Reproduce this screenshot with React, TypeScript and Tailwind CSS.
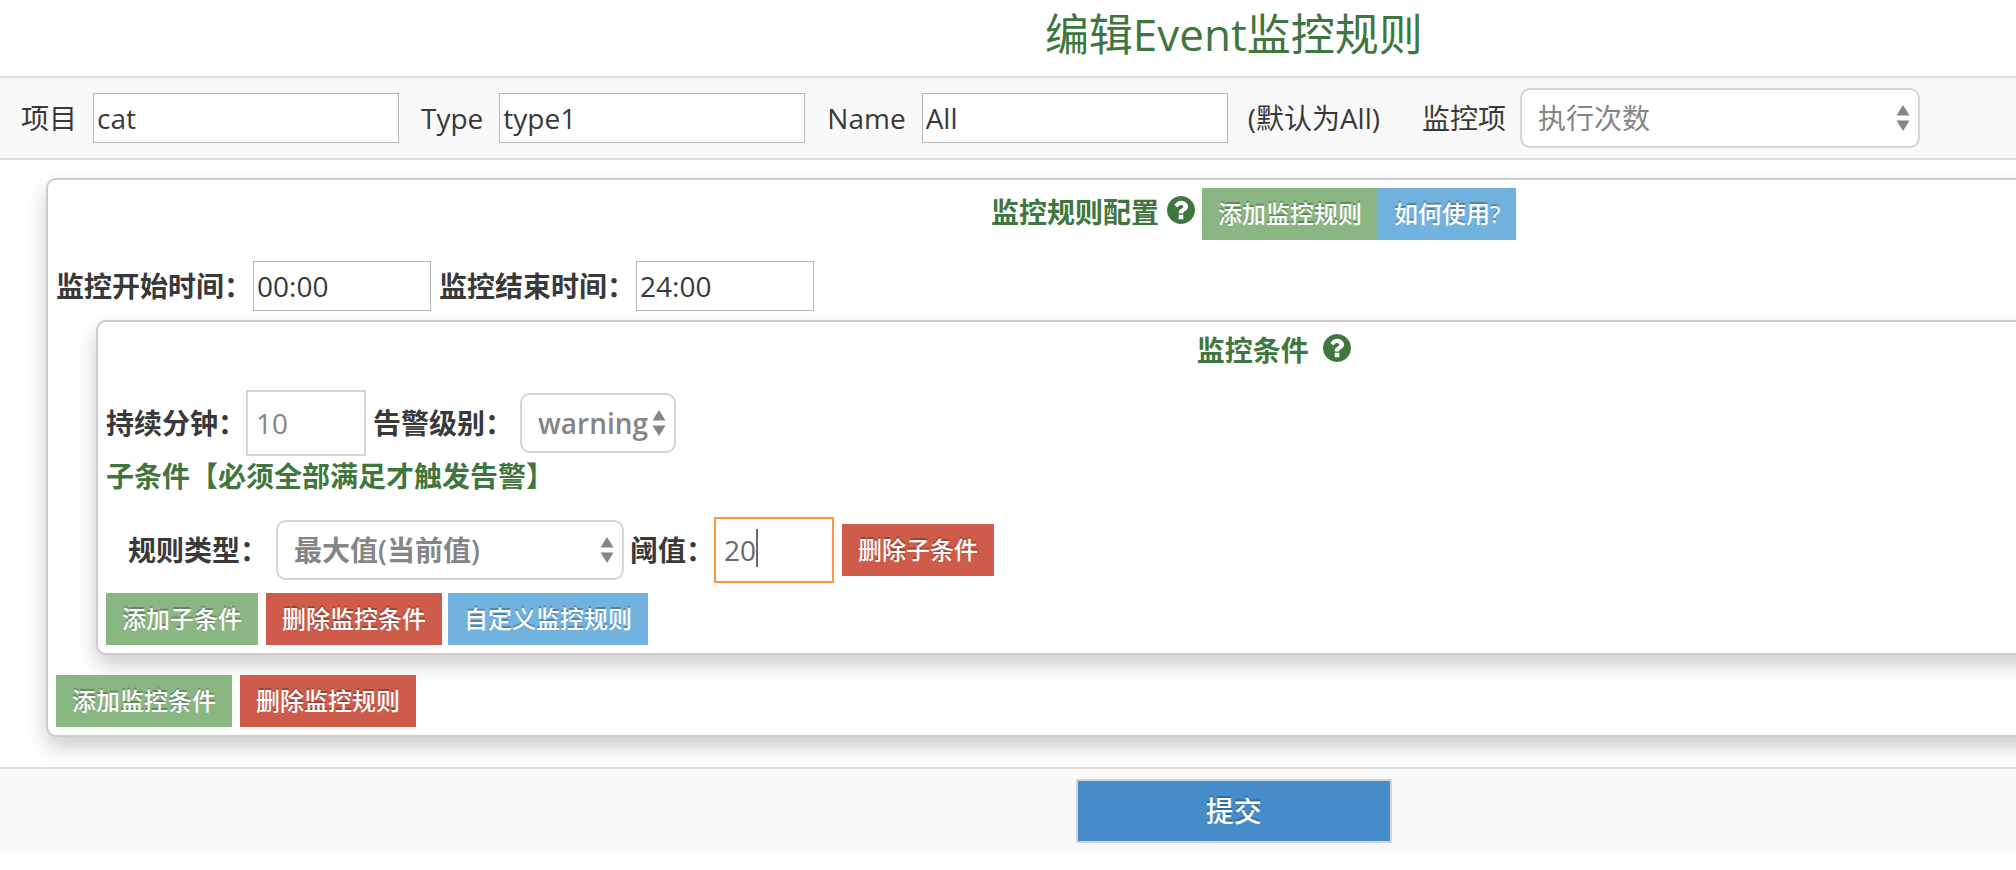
import type { ButtonHTMLAttributes, InputHTMLAttributes, ReactNode } from "react";

const tones = {
  success: "bg-[#89b682]",
  danger: "bg-[#cf5b4a]",
  info: "bg-[#72b2de]",
};

function ActionButton({ tone, ...rest }: { tone: keyof typeof tones } & ButtonHTMLAttributes<HTMLButtonElement>) {
  return (
    <button
      type="button"
      className={`${tones[tone]} h-[52px] px-4 text-2xl font-medium text-white whitespace-nowrap [text-shadow:0_-2px_0_rgba(0,0,0,0.25)]`}
      {...rest}
    />
  );
}

function HelpIcon() {
  return (
    <svg viewBox="0 0 1536 1536" className="size-7 shrink-0" fill="currentColor" role="img" aria-label="帮助">
      <path d="M896 1248v-192q0-14-9-23t-23-9H672q-14 0-23 9t-9 23v192q0 14 9 23t23 9h192q14 0 23-9t9-23zM1152 576q0-88-55.500-163T958 297t-170-41q-243 0-371 213-15 24 8 42l132 100q7 6 19 6 16 0 25-12 53-68 86-92 34-24 86-24 48 0 85.500 26t37.500 59q0 38-20 61t-68 45q-63 28-115.500 86.500T640 892v36q0 14 9 23t23 9h192q14 0 23-9t9-23q0-19 21.500-49.500T972 829q32-18 49-28.500t46-35 44.500-48 28-60.500 12.500-81zM1536 768q0 209-103 385.500T1153.500 1433 768 1536t-385.500-103T103 1153.500 0 768t103-385.500T382.500 103 768 0t385.500 103T1433 382.500 1536 768z" />
    </svg>
  );
}

function Select({ id, width, options }: { id: string; width: string; options: string[] }) {
  return (
    <span className={`relative inline-flex h-[60px] ${width}`}>
      <select
        id={id}
        className="h-full w-full appearance-none rounded-[10px] border-2 border-[#d5d5d5] bg-white pl-4 pr-6 text-[#858585] outline-none"
      >
        {options.map((option) => (
          <option key={option}>{option}</option>
        ))}
      </select>
      <svg viewBox="0 0 14 26" className="pointer-events-none absolute right-2.5 top-[17px] h-[26px] w-3.5" fill="#858585" aria-hidden="true">
        <path d="M7 0l6.500 10.500H.5zM7 26l6.500-10.500H.5z" />
      </svg>
    </span>
  );
}

function PlainInput(props: InputHTMLAttributes<HTMLInputElement>) {
  return <input type="text" {...props} className={`h-[50px] border border-[#b5b5b5] bg-white px-[3px] font-medium outline-none ${props.className}`} />;
}

function Label({ id, children }: { id: string; children: ReactNode }) {
  return (
    <label htmlFor={id} className="whitespace-nowrap">
      {children}
    </label>
  );
}

const panel = "rounded-[10px] border-2 border-[#ccc] bg-white p-2 shadow-[0_10px_20px_rgba(0,0,0,0.2)]";

export default function App() {
  return (
    <div className="overflow-x-hidden bg-white">
      <form className="w-[122.4%] font-['Open_Sans','Noto_Sans_CJK_SC',sans-serif] text-[28px] leading-10 text-[#393939]">
        <h1 className="flex h-[76px] items-start justify-center pt-1 text-[44px] leading-[60px] text-[#3f763e]">编辑Event监控规则</h1>

        <div className="flex h-[84px] items-center border-y-2 border-[#ddd] bg-[#f9f9f9] pl-[21px]">
          <div className="flex items-center gap-4">
            <Label id="project">项目</Label>
            <PlainInput id="project" defaultValue="cat" className="w-[306px]" />
          </div>
          <div className="ml-[22px] flex items-center gap-4">
            <Label id="type">Type</Label>
            <PlainInput id="type" defaultValue="type1" className="w-[306px]" />
          </div>
          <div className="ml-[22px] flex items-center gap-4">
            <Label id="name">Name</Label>
            <PlainInput id="name" defaultValue="All" className="w-[306px]" />
            <span className="ml-1">(默认为All)</span>
          </div>
          <div className="ml-[42px] flex items-center gap-3.5">
            <Label id="metric">监控项</Label>
            <Select id="metric" width="w-[400px]" options={["执行次数"]} />
          </div>
        </div>

        <section className={`${panel} mt-[18px] mr-1.5 ml-[46px] font-semibold`}>
          <header className="flex justify-center text-[#3f763e]">
            <h2 className="mt-1">监控规则配置</h2>
            <span className="mt-2 mr-[7px] ml-2 flex">
              <HelpIcon />
            </span>
            <div className="flex">
              <ActionButton tone="success">添加监控规则</ActionButton>
              <ActionButton tone="info">如何使用?</ActionButton>
            </div>
          </header>

          <div className="mt-[21px] flex items-center">
            <Label id="start">监控开始时间：</Label>
            <PlainInput id="start" defaultValue="00:00" className="mr-2 ml-px w-[178px]" />
            <Label id="end">监控结束时间：</Label>
            <PlainInput id="end" defaultValue="24:00" className="ml-px w-[178px]" />
          </div>

          <section className={`${panel} mt-[9px] ml-10`}>
            <header className="flex justify-center gap-3.5 text-[#3f763e]">
              <h3>监控条件</h3>
              <span className="mt-1 flex">
                <HelpIcon />
              </span>
            </header>

            <div className="mt-5 flex items-center">
              <Label id="minutes">持续分钟：</Label>
              <input
                id="minutes"
                type="text"
                defaultValue="10"
                className="mr-[7px] h-[66px] w-[120px] border-2 border-[#d5d5d5] px-2 font-medium text-[#858585] outline-none"
              />
              <Label id="level">告警级别：</Label>
              <span className="ml-[7px] flex">
                <Select id="level" width="w-[156px]" options={["warning", "error"]} />
              </span>
            </div>

            <h4 className="text-[#3f763e]">子条件【必须全部满足才触发告警】</h4>

            <div className="mt-[21px] ml-[22px] flex items-center">
              <Label id="ruleType">规则类型：</Label>
              <span className="mr-1.5 ml-2 flex">
                <Select id="ruleType" width="w-[348px]" options={["最大值(当前值)"]} />
              </span>
              <Label id="threshold">阈值：</Label>
              <span className="relative mr-2 flex">
                <input
                  id="threshold"
                  type="text"
                  defaultValue="20"
                  className="h-[66px] w-[120px] border-2 border-[#f59942] px-2 font-medium text-[#696969] outline-none"
                />
                <span className="absolute top-3 left-[42px] h-[38px] w-0.5 bg-[#696969]" />
              </span>
              <ActionButton tone="danger">删除子条件</ActionButton>
            </div>

            <div className="mt-2.5 flex">
              <ActionButton tone="success">添加子条件</ActionButton>
              <span className="mr-1.5 ml-2 flex">
                <ActionButton tone="danger">删除监控条件</ActionButton>
              </span>
              <ActionButton tone="info">自定义监控规则</ActionButton>
            </div>
          </section>

          <div className="mt-5 flex gap-2">
            <ActionButton tone="success">添加监控条件</ActionButton>
            <ActionButton tone="danger">删除监控规则</ActionButton>
          </div>
        </section>

        <footer className="mt-[30px] flex justify-center border-t-2 border-[#ddd] bg-[#f9f9f9] py-2.5">
          <button
            type="submit"
            className="h-16 w-[316px] border-2 border-[#d5d5d5] bg-[#458cc9] font-medium text-white [text-shadow:0_-2px_0_rgba(0,0,0,0.25)]"
          >
            提交
          </button>
        </footer>
      </form>
    </div>
  );
}
